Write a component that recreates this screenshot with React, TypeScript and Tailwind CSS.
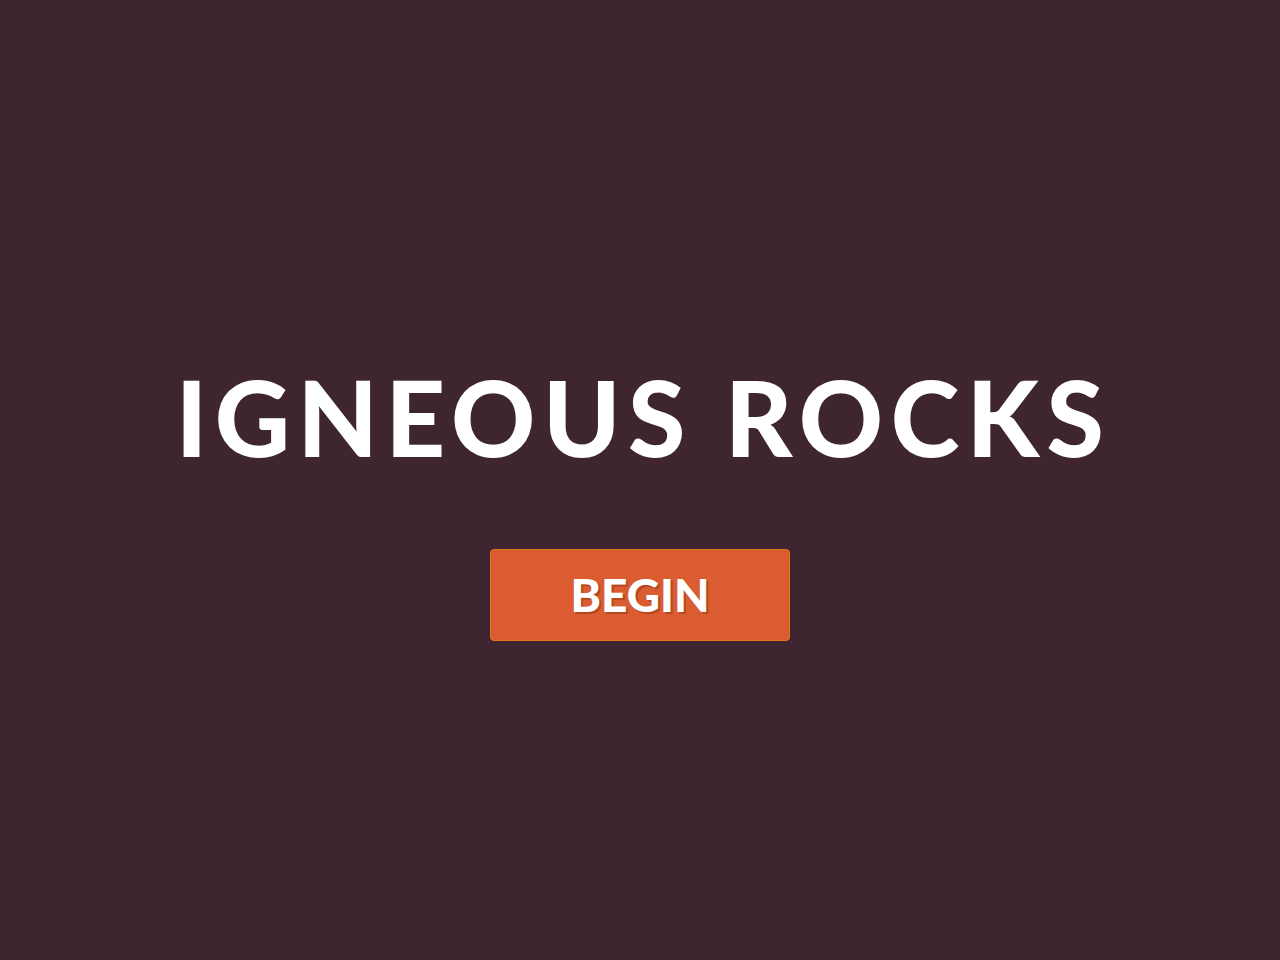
export default function App() {
  return (
    <div className="min-h-screen w-full bg-[#3e2530] flex flex-col items-center justify-center font-['Lato','Noto_Sans',sans-serif]">
      <div className="flex flex-col items-center pt-[45px]">
        <h1 className="text-white font-black text-[104px] leading-none tracking-[7.5px] uppercase pl-[7px]">
          Igneous Rocks
        </h1>
        <button className="mt-[80px] w-[300px] h-[92px] rounded-[4px] bg-[#da5c30] border border-[#e2791c] text-white font-black text-[46px] [text-shadow:2px_2px_0_#b4481f]">
          BEGIN
        </button>
      </div>
    </div>
  );
}
